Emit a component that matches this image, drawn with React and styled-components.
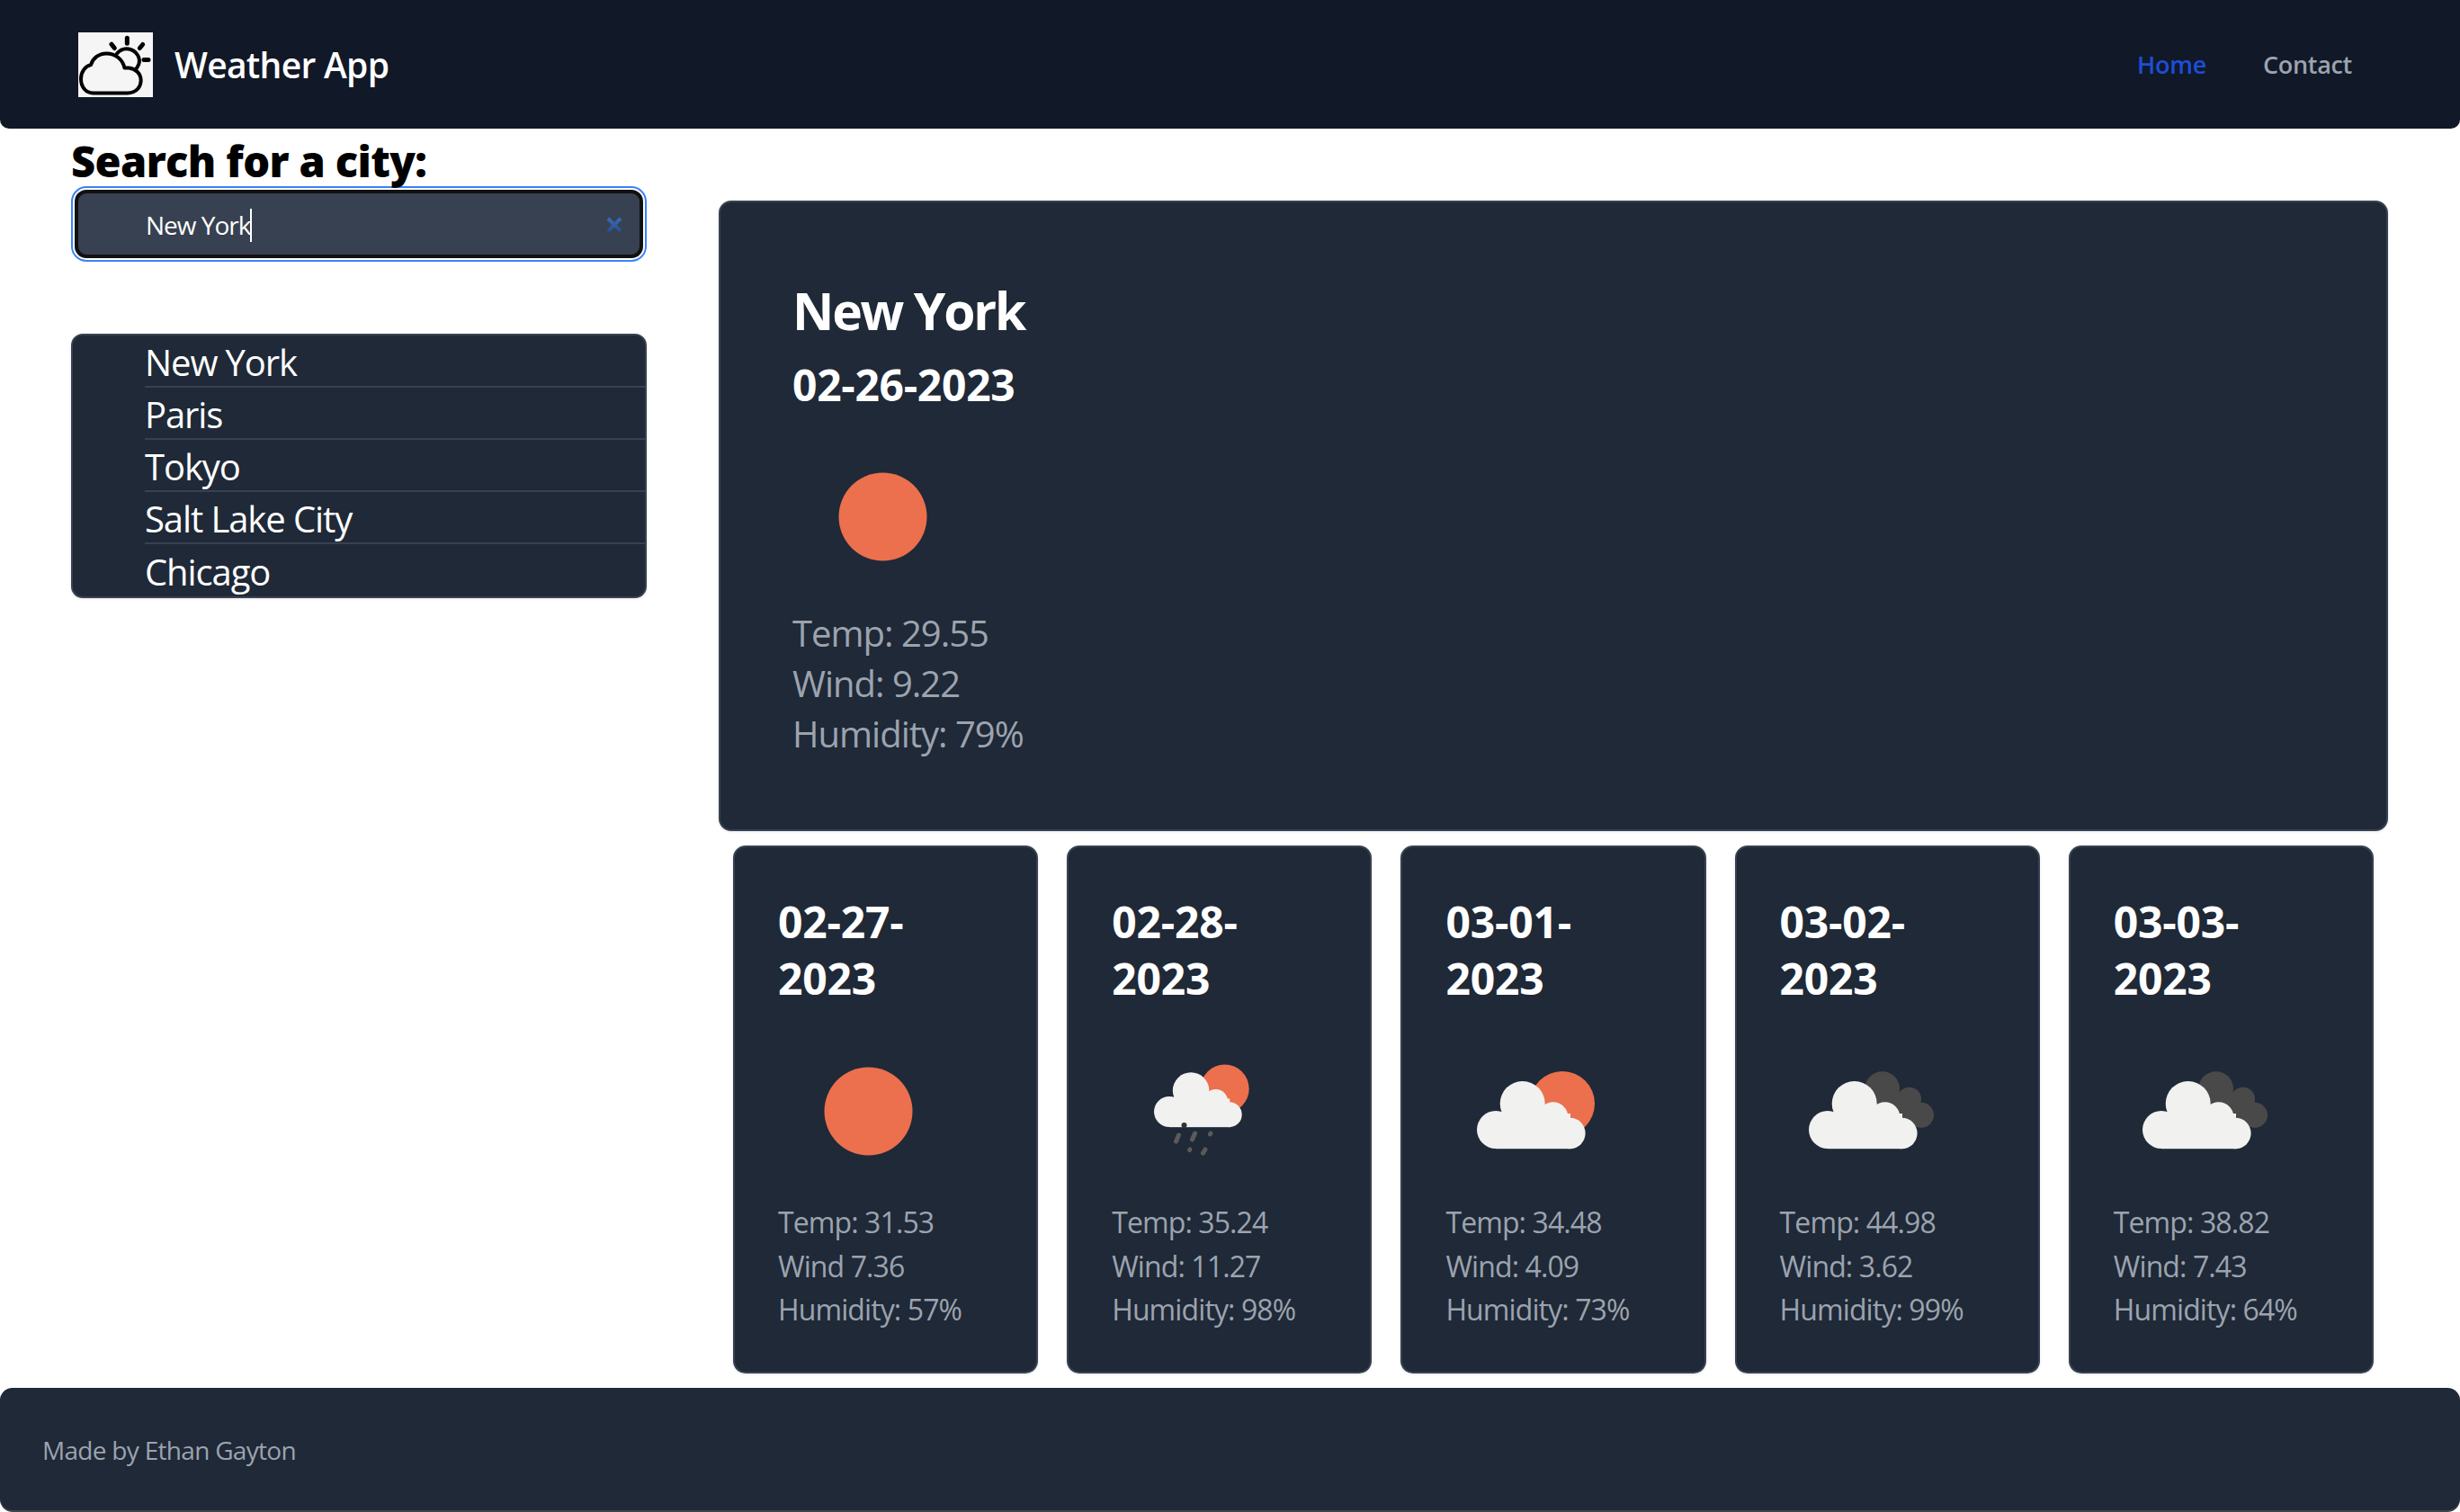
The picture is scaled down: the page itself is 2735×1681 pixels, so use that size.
import React from "react";
import styled, { createGlobalStyle } from "styled-components";

const Global = createGlobalStyle`
  html, body { margin: 0; padding: 0; background: #fff; }
  body { font-family: "Open Sans", "Noto Sans", "Liberation Sans", sans-serif; }
  * { box-sizing: border-box; }
`;

const Page = styled.div`
  width: 2735px;
  height: 1681px;
  padding-bottom: 2px;
  display: flex;
  flex-direction: column;
`;
const Nav = styled.nav`
  height: 143px;
  flex: none;
  background: #111827;
  border-radius: 0 0 10px 10px;
  display: flex;
  align-items: center;
  justify-content: space-between;
  padding: 0 120px 0 87px;
`;
const Brand = styled.div`
  display: flex;
  align-items: center;
  gap: 24px;
`;
const Logo = styled.svg`
  width: 83px;
  height: 72px;
  display: block;
  background: #f5f5f5;
`;
const BrandName = styled.span`
  font-size: 39px;
  line-height: 56px;
  font-weight: 600;
  color: #fff;
  letter-spacing: -0.7px;
`;
const Links = styled.div`
  display: flex;
  gap: 63px;
`;
const NavLink = styled.a`
  font-size: 27px;
  line-height: 42px;
  font-weight: 600;
  letter-spacing: -0.3px;
  color: ${(p) => (p.$active ? "#1d4ed8" : "#9ca3af")};
`;
const Content = styled.main`
  flex: 1;
  display: grid;
  grid-template-columns: 640px 1856px;
  column-gap: 80px;
  padding: 0 80px 0 79px;
`;
const Side = styled.aside`
  padding-top: 8px;
`;
const SearchLabel = styled.label`
  display: block;
  font-size: 47px;
  line-height: 56px;
  font-weight: 800;
  letter-spacing: -0.6px;
  color: #000;
`;
const SearchBox = styled.div`
  margin: 4px 4px 0;
  height: 76px;
  border: 4px solid #111;
  border-radius: 13px;
  background: #374151;
  box-shadow: 0 0 0 2px #fff, 0 0 0 4px #3b82f6;
  display: flex;
  align-items: center;
  justify-content: space-between;
  padding: 2px 18px 0 75px;
`;
const SearchText = styled.span`
  display: flex;
  align-items: center;
  font-size: 28px;
  line-height: 37px;
  color: #fff;
  letter-spacing: -1px;
`;
const Caret = styled.i`
  display: block;
  width: 2px;
  height: 37px;
  background: #fff;
`;
const CityList = styled.ul`
  list-style: none;
  margin: 84px 0 0;
  padding: 0;
  background: #1f2937;
  border: 2px solid #374151;
  border-radius: 13px;
  box-shadow: 0 1px 3px rgba(0, 0, 0, 0.1);
  overflow: hidden;
`;
const City = styled.li`
  margin-left: 80px;
  height: 58px;
  display: flex;
  align-items: center;
  padding-top: 2px;
  font-size: 40px;
  color: #fff;
  letter-spacing: -1.1px;
  border-bottom: 2px solid #374151;
  &:last-child { border-bottom: 0; }
`;
const Forecast = styled.section`
  padding-top: 80px;
`;
const Today = styled.article`
  height: 701px;
  background: #1f2937;
  border: 2px solid #374151;
  border-radius: 14px;
  box-shadow: 0 1px 3px rgba(0, 0, 0, 0.1);
  padding: 85px 80px 0;
`;
const TodayCity = styled.h1`
  margin: 0;
  font-size: 57px;
  line-height: 70px;
  font-weight: 700;
  letter-spacing: -2.2px;
  color: #fff;
`;
const TodayDate = styled.h2`
  margin: 16px 0 0;
  font-size: 48px;
  line-height: 63px;
  font-weight: 700;
  letter-spacing: -0.3px;
  color: #fff;
`;
const IconBox = styled.svg`
  display: block;
  width: 175px;
  height: 175px;
  margin-left: 13px;
`;
const TodayIcon = styled(IconBox)`
  margin-top: 28px;
`;
const TodayStats = styled.div`
  margin-top: 14px;
  font-size: 40px;
  line-height: 56px;
  color: #9ca3af;
  letter-spacing: -1px;
`;
const Days = styled.div`
  display: flex;
  gap: 32px;
  padding: 16px 16px 0;
`;
const DayCard = styled.article`
  flex: 1;
  height: 587px;
  background: #1f2937;
  border: 2px solid #374151;
  border-radius: 14px;
  box-shadow: 0 1px 3px rgba(0, 0, 0, 0.1);
  padding: 51px 60px 0 48px;
`;
const DayDate = styled.h3`
  margin: 0;
  font-size: 48px;
  line-height: 63px;
  font-weight: 700;
  letter-spacing: -0.2px;
  color: #fff;
`;
const DayIcon = styled(IconBox)`
  margin-top: 29px;
  margin-left: 13px;
`;
const DayStats = styled.div`
  margin-top: 12px;
  font-size: 32px;
  line-height: 48.5px;
  color: #9ca3af;
  letter-spacing: -0.9px;
  white-space: nowrap;
`;
const Footer = styled.footer`
  height: 136px;
  flex: none;
  background: #1f2937;
  border-radius: 14px;
  box-shadow: 0 2px 0 #41444a;
  display: flex;
  align-items: center;
  padding: 2px 47px 0;
  font-size: 28px;
  color: #9ca3af;
  letter-spacing: -0.7px;
`;

const SUN = "#ec6f4e";
const WHITE = "#f1f1ef";
const DARK = "#4a4a4a";

const CloudShape = ({ fill = WHITE, transform }) => (
  <g fill={fill} transform={transform}>
    <circle cx="43" cy="108" r="21" />
    <circle cx="72.7" cy="79" r="25" />
    <circle cx="106.7" cy="94" r="16.7" />
    <circle cx="125.4" cy="112" r="17.2" />
    <rect x="43" y="90" width="83" height="39.2" />
  </g>
);

const WeatherIcon = ({ kind, as: Box = DayIcon }) => (
  <Box viewBox="0 0 175 175">
    <defs>
      <filter id="soft" x="-10%" y="-10%" width="120%" height="120%">
        <feGaussianBlur stdDeviation="0.5" />
      </filter>
    </defs>
    <g filter="url(#soft)">
      {kind === "sun" && <circle cx="87.5" cy="87.5" r="49" fill={SUN} />}
      {kind === "rain" && (
        <>
          <circle cx="112.7" cy="62.5" r="27" fill={SUN} />
          <CloudShape transform="translate(16.2 0.5) scale(0.81)" />
          <g stroke="#5b5a58" strokeWidth="5" strokeLinecap="round">
            <path d="M61.5 114 L58.5 121" />
            <path d="M79.5 112 L76.5 119" />
            <path d="M97 112 L96.5 113" />
            <path d="M74 130 L73.5 130.5" />
            <path d="M91 130 L88.5 134" />
          </g>
          <circle cx="67.5" cy="103" r="3" fill="#333" />
        </>
      )}
      {kind === "few" && (
        <>
          <circle cx="117" cy="79" r="36" fill={SUN} />
          <CloudShape />
        </>
      )}
      {kind === "clouds" && (
        <>
          <g fill={DARK}>
            <circle cx="100.7" cy="62.5" r="19.3" />
            <circle cx="130.7" cy="74" r="13.3" />
            <circle cx="144" cy="91.8" r="14" />
            <rect x="92" y="70" width="50" height="35" />
          </g>
          <CloudShape transform="translate(-3 0)" />
        </>
      )}
    </g>
  </Box>
);

const days = [
  { d: "02-27-2023", k: "sun", t: "Temp: 31.53", w: "Wind 7.36", h: "Humidity: 57%" },
  { d: "02-28-2023", k: "rain", t: "Temp: 35.24", w: "Wind: 11.27", h: "Humidity: 98%" },
  { d: "03-01-2023", k: "few", t: "Temp: 34.48", w: "Wind: 4.09", h: "Humidity: 73%" },
  { d: "03-02-2023", k: "clouds", t: "Temp: 44.98", w: "Wind: 3.62", h: "Humidity: 99%" },
  { d: "03-03-2023", k: "clouds", t: "Temp: 38.82", w: "Wind: 7.43", h: "Humidity: 64%" },
];
const cities = ["New York", "Paris", "Tokyo", "Salt Lake City", "Chicago"];

export default function App() {
  return (
    <Page>
      <Global />
      <Nav>
        <Brand>
          <Logo viewBox="36 30 249 215">
            <g fill="none" stroke="#000" strokeWidth="12" strokeLinecap="round" strokeLinejoin="round">
              <path d="M85 232 H200 C232 232 245 208 245 190 C245 166 226 150 205 148 H190 C185 120 160 100 130 100 C105 100 85 115 78 138 C60 142 45 160 45 185 C45 212 62 232 85 232 Z" />
              <path d="M165 100 C175 88 190 82 205 85 C230 90 245 115 238 135 C235 142 232 148 228 152" />
              <path d="M199 48 V66" strokeWidth="15" />
              <path d="M147 69 L157 82" strokeWidth="15" />
              <path d="M251 70 L241 82" strokeWidth="15" />
              <path d="M255 121 H270" strokeWidth="15" />
            </g>
          </Logo>
          <BrandName>Weather App</BrandName>
        </Brand>
        <Links>
          <NavLink $active>Home</NavLink>
          <NavLink>Contact</NavLink>
        </Links>
      </Nav>
      <Content>
        <Side>
          <SearchLabel>Search for a city:</SearchLabel>
          <SearchBox>
            <SearchText>
              New York
              <Caret />
            </SearchText>
            <svg width="20" height="20" viewBox="0 0 20 20">
              <defs>
                <linearGradient id="chev" x1="0" y1="0" x2="0" y2="20" gradientUnits="userSpaceOnUse">
                  <stop offset="0" stopColor="#3a6fc4" />
                  <stop offset="1" stopColor="#2b4a80" />
                </linearGradient>
              </defs>
              <path d="M3 3 L17 17 M17 3 L3 17" stroke="url(#chev)" strokeWidth="4" fill="none" />
            </svg>
          </SearchBox>
          <CityList>
            {cities.map((c) => (
              <City key={c}>{c}</City>
            ))}
          </CityList>
        </Side>
        <Forecast>
          <Today>
            <TodayCity>New York</TodayCity>
            <TodayDate>02-26-2023</TodayDate>
            <WeatherIcon kind="sun" as={TodayIcon} />
            <TodayStats>
              <div>Temp: 29.55</div>
              <div>Wind: 9.22</div>
              <div>Humidity: 79%</div>
            </TodayStats>
          </Today>
          <Days>
            {days.map((x) => (
              <DayCard key={x.d}>
                <DayDate>{x.d}</DayDate>
                <WeatherIcon kind={x.k} />
                <DayStats>
                  <div>{x.t}</div>
                  <div>{x.w}</div>
                  <div>{x.h}</div>
                </DayStats>
              </DayCard>
            ))}
          </Days>
        </Forecast>
      </Content>
      <Footer>Made by Ethan Gayton</Footer>
    </Page>
  );
}
